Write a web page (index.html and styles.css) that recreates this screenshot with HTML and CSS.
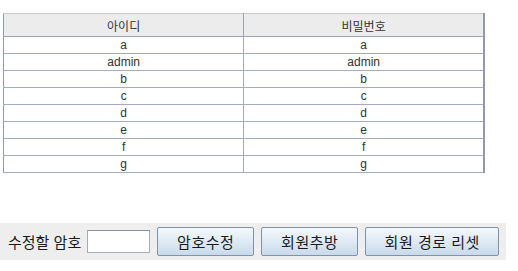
FILE: index.html
```html
<!DOCTYPE html>
<html lang="ko">
<head>
    <meta charset="UTF-8" />
    <title>회원 관리</title>
    <link rel="stylesheet" href="styles.css">
</head>
<body>
    <div class="table-wrap">
        <table class="member-table">
            <thead>
                <tr><th>아이디</th><th>비밀번호</th></tr>
            </thead>
            <tbody>
                <tr><td>a</td><td>a</td></tr>
                <tr><td>admin</td><td>admin</td></tr>
                <tr><td>b</td><td>b</td></tr>
                <tr><td>c</td><td>c</td></tr>
                <tr><td>d</td><td>d</td></tr>
                <tr><td>e</td><td>e</td></tr>
                <tr><td>f</td><td>f</td></tr>
                <tr><td>g</td><td>g</td></tr>
            </tbody>
        </table>
    </div>

    <div class="control-bar">
        <span class="label">수정할 암호</span>
        <input class="pw-input" type="text" />
        <button class="btn btn-change">암호수정</button>
        <button class="btn btn-kick">회원추방</button>
        <button class="btn btn-reset">회원 경로 리셋</button>
    </div>
</body>
</html>
```

FILE: styles.css
```css
* {
    margin: 0;
    padding: 0;
    box-sizing: border-box;
}

body {
    font-family: 'Liberation Sans', 'Noto Sans CJK KR', sans-serif;
    background: #ffffff;
    color: #333333;
    width: 518px;
    height: 271px;
    overflow: hidden;
}

/* Table */
.table-wrap {
    margin: 13px 0 0 3px;
    width: 482px;
    height: 159px;
}

.member-table {
    width: 100%;
    border-collapse: collapse;
    table-layout: fixed;
    border-left: 1px solid #8e9bad;
    border-right: 2px solid #8e9bad;
}

.member-table th {
    height: 23px;
    background: #ececec;
    font-weight: normal;
    font-size: 12px;
    color: #333333;
    border-top: 1px solid #c8cdd3;
    border-bottom: 1px solid #9aa6b6;
    border-right: 1px solid #9aa6b6;
    padding-top: 1px;
}

.member-table td {
    height: 17px;
    font-size: 12px;
    color: #333333;
    text-align: center;
    line-height: 15px;
    border-bottom: 1px solid #a3adbb;
    border-right: 1px solid #a3adbb;
}

.member-table th:last-child,
.member-table td:last-child {
    border-right: none;
}

/* Bottom controls */
.control-bar {
    margin-top: 51px;
    width: 506px;
    height: 37px;
    background: #eeeeee;
    display: flex;
    align-items: center;
    gap: 7px;
    padding-left: 8px;
}

.control-bar > * {
    flex-shrink: 0;
    white-space: nowrap;
}

.label {
    font-family: 'Noto Sans CJK KR', sans-serif;
    font-size: 15px;
    color: #1a1a1a;
    margin-right: -1px;
}

.pw-input {
    width: 63px;
    height: 23px;
    border: 1px solid #a4acb6;
    border-top-color: #8c949e;
    background: #ffffff;
}

.btn {
    height: 29px;
    font-family: 'Noto Sans CJK KR', sans-serif;
    font-size: 15px;
    letter-spacing: 0.5px;
    color: #1a1a1a;
    border: 1px solid #7f93ab;
    border-radius: 2px;
    background: linear-gradient(to bottom, #f4f8fc 0%, #dfe9f4 50%, #c9daeb 100%);
}

.btn-change { width: 97px; }
.btn-kick { width: 97px; }
.btn-reset { width: 134px; }
```
